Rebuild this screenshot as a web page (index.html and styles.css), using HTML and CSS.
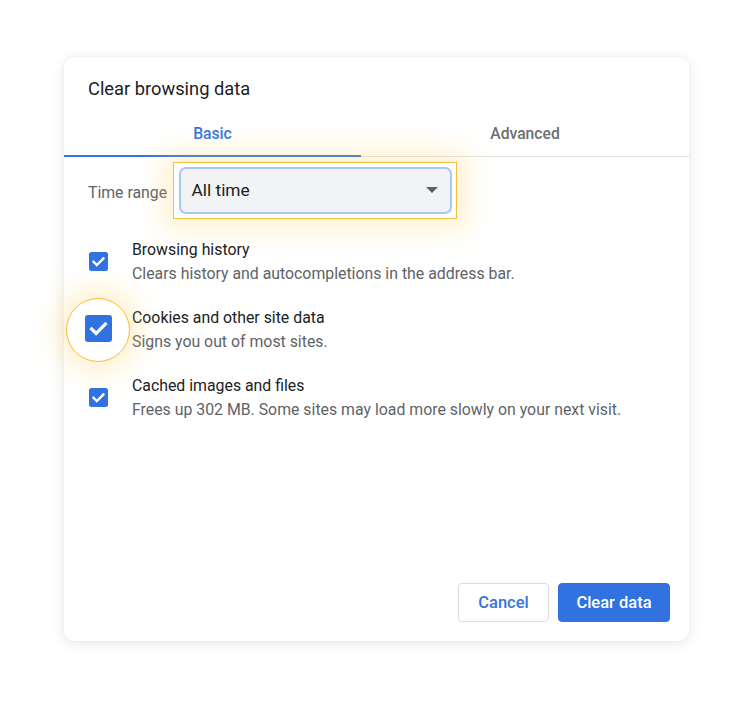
FILE: index.html
```html
<!DOCTYPE html>
<html lang="en">
<head>
<meta charset="utf-8">
<title>Clear browsing data</title>
<link rel="stylesheet" href="styles.css">
</head>
<body>
<div class="page">
  <div class="dialog">
    <h1 class="title">Clear browsing data</h1>
    <div class="tabs">
      <div class="tab active">Basic</div>
      <div class="tab">Advanced</div>
    </div>
    <div class="content">
      <div class="range">
        <span class="range-label">Time range</span>
        <div class="highlight-box">
          <div class="select">
            <span class="select-value">All time</span>
            <svg class="select-arrow" width="12" height="6" viewBox="0 0 12 6"><path d="M0 0h12L6 6z" fill="#5f6368"/></svg>
          </div>
        </div>
      </div>
      <div class="options">
        <div class="option">
          <div class="check-cell">
            <span class="checkbox">
              <svg width="19" height="19" viewBox="0 0 19 19"><path d="M4.6 9.8l3.2 3.2 6.6-6.6" fill="none" stroke="#fff" stroke-width="2.4" stroke-linecap="square"/></svg>
            </span>
          </div>
          <div class="option-text">
            <div class="option-title">Browsing history</div>
            <div class="option-desc">Clears history and autocompletions in the address bar.</div>
          </div>
        </div>
        <div class="option">
          <div class="check-cell">
            <span class="ring"></span>
            <span class="checkbox large">
              <svg width="27" height="27" viewBox="0 0 27 27"><path d="M6.6 13.9l4.5 4.5 9.3-9.3" fill="none" stroke="#fff" stroke-width="3.2" stroke-linecap="square"/></svg>
            </span>
          </div>
          <div class="option-text">
            <div class="option-title">Cookies and other site data</div>
            <div class="option-desc">Signs you out of most sites.</div>
          </div>
        </div>
        <div class="option">
          <div class="check-cell">
            <span class="checkbox">
              <svg width="19" height="19" viewBox="0 0 19 19"><path d="M4.6 9.8l3.2 3.2 6.6-6.6" fill="none" stroke="#fff" stroke-width="2.4" stroke-linecap="square"/></svg>
            </span>
          </div>
          <div class="option-text">
            <div class="option-title">Cached images and files</div>
            <div class="option-desc">Frees up 302 MB. Some sites may load more slowly on your next visit.</div>
          </div>
        </div>
      </div>
    </div>
    <div class="footer">
      <button class="btn btn-secondary">Cancel</button>
      <button class="btn btn-primary">Clear data</button>
    </div>
  </div>
</div>
</body>
</html>
```
FILE: styles.css
```css
* { box-sizing: border-box; }
html, body {
  margin: 0;
  padding: 0;
  background: #ffffff;
}
body {
  font-family: Roboto, "Liberation Sans", Arial, sans-serif;
  color: #202124;
  width: 750px;
  height: 702px;
  overflow: hidden;
}
.page {
  padding: 57px 0 0 64px;
}
.dialog {
  width: 625px;
  height: 584px;
  background: #fff;
  border-radius: 10px;
  box-shadow: 0 2px 14px rgba(0, 0, 0, 0.10), 0 0 2px rgba(0, 0, 0, 0.06);
  display: flex;
  flex-direction: column;
}
.title {
  margin: 0;
  padding: 20px 24px 0;
  font-size: 18.3px;
  line-height: 24px;
  font-weight: 400;
  color: #202124;
}
.tabs {
  display: flex;
  border-bottom: 1px solid #e3e3e3;
}
.tab {
  flex: 1;
  text-align: center;
  padding: 23px 0 11px;
  line-height: 20px;
  font-size: 15.7px;
  font-weight: 500;
  color: #6b6e72;
  border-bottom: 2px solid transparent;
  margin-bottom: -1px;
}
.tab:first-child { flex: 0 0 297px; }
.tab.active {
  color: #3474e0;
  border-bottom-color: #3474e0;
}
.content {
  padding: 0 24px;
}
.range {
  display: flex;
  align-items: center;
  gap: 6px;
  margin-top: 5px;
}
.range-label {
  font-size: 15.8px;
  color: #5f6368;
  padding-top: 4px;
}
.highlight-box {
  border: 1.5px solid #f6c142;
  padding: 3.5px 4.5px 4.5px;
  background: #fff;
  box-shadow: 0 0 28px 10px rgba(255, 205, 80, 0.28);
}
.select {
  width: 273px;
  height: 47px;
  background: #f1f3f4;
  border: 2px solid #a9c6f6;
  border-radius: 7px;
  display: flex;
  align-items: center;
  justify-content: space-between;
  padding: 0 12px 0 11px;
}
.select-value {
  font-size: 17.3px;
  color: #202124;
}
.select-arrow { display: block; }
.options {
  margin-top: 18.5px;
  display: flex;
  flex-direction: column;
  gap: 20px;
}
.option {
  display: flex;
  align-items: center;
  gap: 24px;
}
.check-cell {
  position: relative;
  width: 20px;
  height: 48px;
  display: flex;
  align-items: center;
  justify-content: center;
}
.checkbox {
  position: relative;
  z-index: 1;
  flex: 0 0 auto;
  width: 19px;
  height: 19px;
  border-radius: 2.5px;
  background: #3072df;
  display: block;
}
.checkbox svg { display: block; }
.checkbox.large {
  width: 27px;
  height: 27px;
  border-radius: 3px;
  margin-top: -3px;
}
.ring {
  position: absolute;
  left: 50%;
  top: 50%;
  width: 64px;
  height: 64px;
  margin: -32px 0 0 -32px;
  border: 1.5px solid #f8bd2e;
  border-radius: 50%;
  background: #fff;
  box-shadow: 0 0 28px 10px rgba(255, 205, 80, 0.28);
}
.option-text {
  font-size: 15.85px;
  line-height: 24px;
}
.option-title { color: #202124; }
.option-desc { color: #5f6368; }
.footer {
  margin-top: auto;
  display: flex;
  justify-content: flex-end;
  gap: 9px;
  padding: 0 19px 19px;
}
.btn {
  font-family: Roboto, "Liberation Sans", Arial, sans-serif;
  font-size: 16.5px;
  font-weight: 500;
  height: 39px;
  border-radius: 4px;
  padding: 0;
  white-space: nowrap;
  cursor: pointer;
}
.btn-secondary {
  background: #fff;
  color: #3474e0;
  border: 1px solid #dadce0;
  width: 91px;
}
.btn-primary {
  background: #3072df;
  color: #fff;
  border: 1px solid #3072df;
  width: 112px;
}
```
